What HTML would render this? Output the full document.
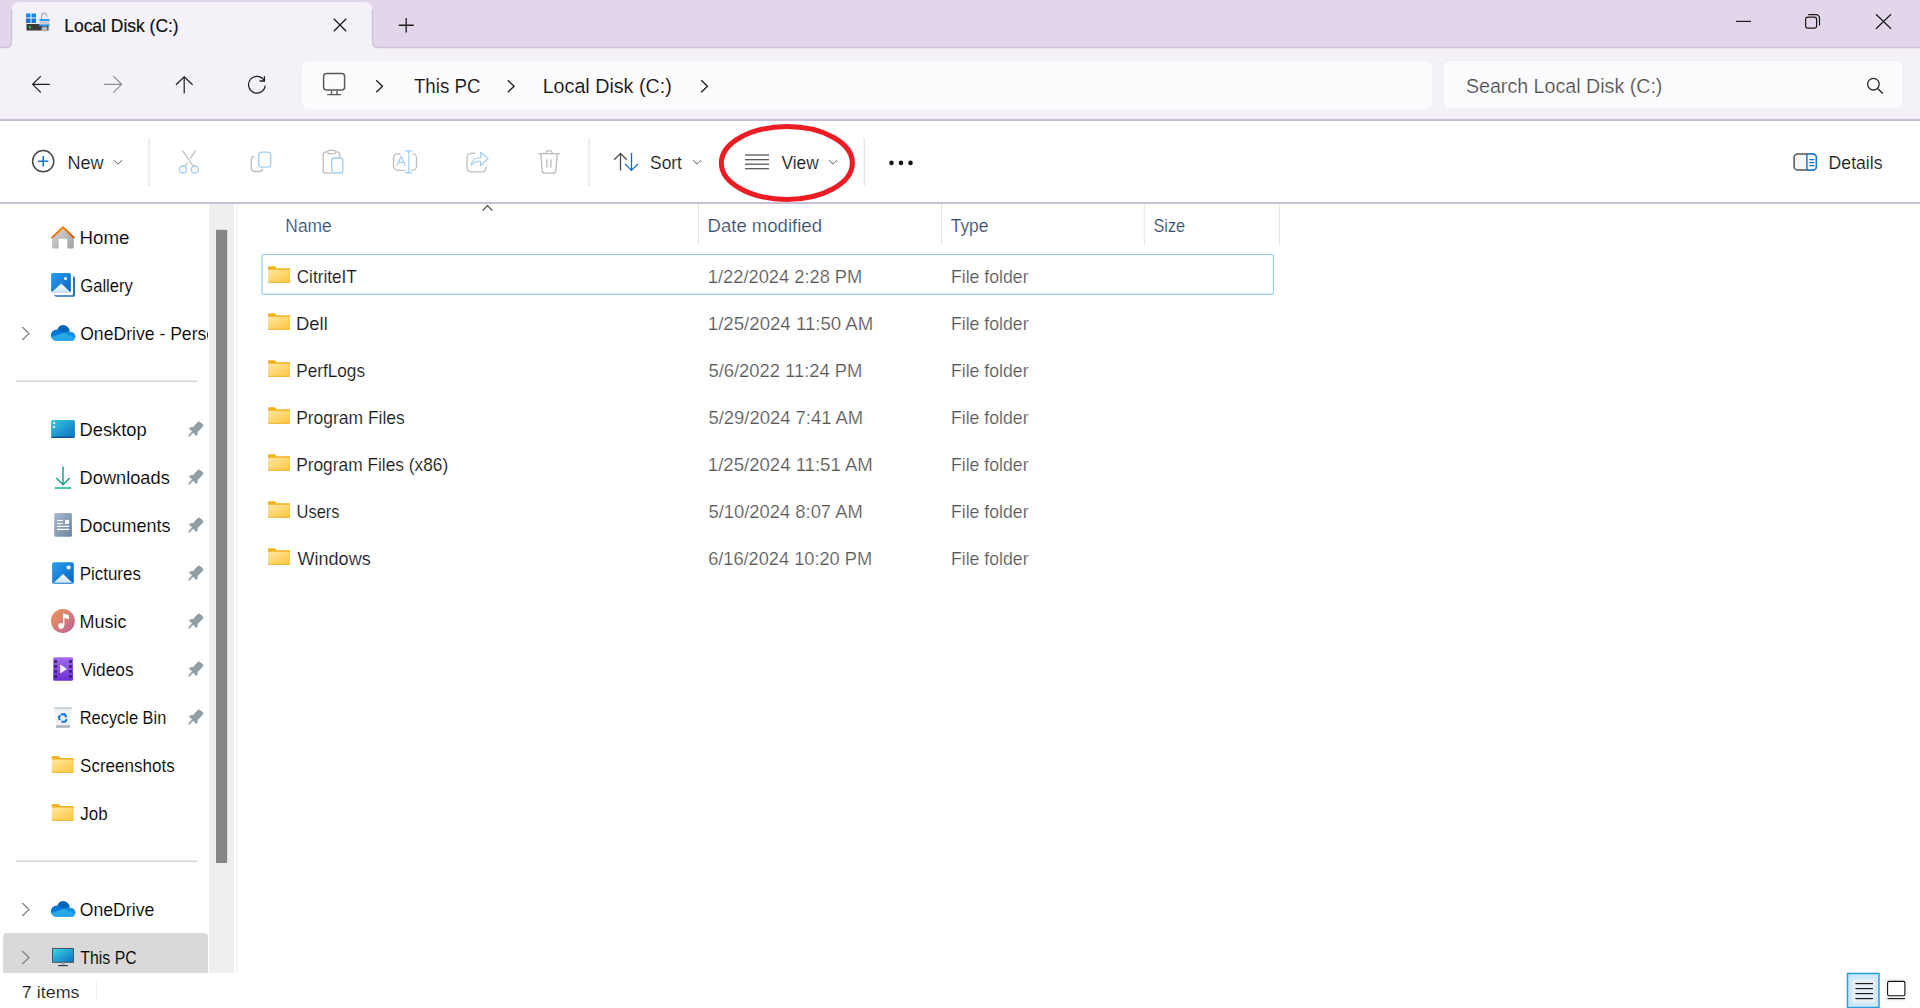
<!DOCTYPE html>
<html><head><meta charset="utf-8"><title>Local Disk (C:)</title>
<style>html,body{margin:0;padding:0;width:1920px;height:1008px;overflow:hidden;background:#fff}
svg{display:block;font-family:"Liberation Sans", sans-serif}</style></head>
<body><svg width="1920" height="1008" viewBox="0 0 1920 1008">
<rect x="0" y="0" width="1920" height="1008" fill="#ffffff"/>
<rect x="0" y="0" width="1920" height="48" fill="#e2d6eb"/>
<path d="M0,48 H5.5 Q12,48 12,41.5 V10 Q12,2 20,2 H364 Q372,2 372,10 V41.5 Q372,48 378.5,48 H1920 V119 H0 Z" fill="#f4f1f8"/>
<path d="M0,47.5 H5.5 Q11.5,47.5 11.5,41.5 V10 M372.5,10 V41.5 Q372.5,47.5 378.5,47.5 H1920" fill="none" stroke="#cfc3db" stroke-width="1.5"/>
<rect x="302" y="61" width="1130" height="48" rx="7" fill="#fcfbfd"/>
<rect x="1443" y="60.5" width="460" height="48.5" rx="7" fill="#fcfbfd" stroke="#eeebf2" stroke-width="1"/>
<rect x="0" y="119" width="1920" height="2" fill="#cbbed8"/>
<rect x="0" y="202" width="1920" height="2" fill="#cbbed8"/>
<rect x="148.5" y="138" width="1.5" height="48" fill="#e8e8e8"/>
<rect x="588.5" y="138" width="1.5" height="48" fill="#e8e8e8"/>
<rect x="863.5" y="138" width="1.5" height="48" fill="#e8e8e8"/>
<g>
<rect x="26" y="13.5" width="4.5" height="4" fill="#1e88e5"/><rect x="31.5" y="13.5" width="4.5" height="4" fill="#1e88e5"/>
<rect x="26" y="18.5" width="4.5" height="4.5" fill="#1976d2"/><rect x="31.5" y="18.5" width="4.5" height="4.5" fill="#1976d2"/>
<rect x="26.5" y="24" width="22" height="6.5" fill="#3a3a3a"/>
<rect x="29" y="26.3" width="2" height="2" fill="#2ee02e"/>
<path d="M41.5,19 v-3.2 a2.7,2.7 0 0 1 5.4,0 v1" fill="none" stroke="#9fb0c0" stroke-width="1.2"/>
<rect x="39.5" y="19" width="10" height="7" fill="#c8cdd3"/>
<rect x="39.5" y="19" width="10" height="1.8" fill="#2196f3"/>
<rect x="39.5" y="24.5" width="10" height="1.8" fill="#2196f3"/>
<ellipse cx="44.5" cy="29" rx="3" ry="2.4" fill="#b0b8c0"/>
</g>
<path d="M333.8,18.8 L346.2,31.2 M346.2,18.8 L333.8,31.2" stroke="#1a1a1a" stroke-width="1.3" fill="none"/>
<path d="M406.2,18 V32.5 M398.8,25.25 H413.7" stroke="#1a1a1a" stroke-width="1.3" fill="none"/>
<path d="M1736,21.4 H1751" stroke="#1a1a1a" stroke-width="1.2"/>
<rect x="1805.6" y="17.2" width="11" height="11" rx="2.2" fill="none" stroke="#1a1a1a" stroke-width="1.2"/>
<path d="M1808.2,14.6 H1816 a3.5,3.5 0 0 1 3.5,3.5 V25.6" fill="none" stroke="#1a1a1a" stroke-width="1.2"/>
<path d="M1876,14.2 L1891,28.8 M1891,14.2 L1876,28.8" stroke="#1a1a1a" stroke-width="1.2" fill="none"/>
<path d="M49.7,84.3 H32.6 M40.9,76.1 L32.6,84.3 L40.9,92.6" stroke="#1c1c1c" stroke-width="1.2" fill="none"/>
<path d="M104,84.3 H121.6 M113.3,76.1 L121.6,84.3 L113.3,92.6" stroke="#8c8c8c" stroke-width="1.2" fill="none"/>
<path d="M184.2,93.6 V76.8 M176,84.8 L184.2,76.8 L192.6,84.8" stroke="#1c1c1c" stroke-width="1.2" fill="none"/>
<path d="M264.1,80.5 A8.35,8.35 0 1 0 265.2,85.6" stroke="#1c1c1c" stroke-width="1.25" fill="none"/>
<path d="M259.6,81 H264.4 V76.3" stroke="#1c1c1c" stroke-width="1.3" fill="none"/>
<rect x="323.6" y="73.6" width="21" height="16.5" rx="3" fill="none" stroke="#5a5a5a" stroke-width="1.5"/>
<path d="M331.5,90.5 V94.5 M337,90.5 V94.5 M327.3,94.6 H341.2" stroke="#5a5a5a" stroke-width="1.4" fill="none"/>
<path d="M376.2,80.2 L382.5,86.2 L376.2,92.2" stroke="#1c1c1c" stroke-width="1.3" fill="none"/>
<path d="M507.8,80.2 L514.1,86.2 L507.8,92.2" stroke="#1c1c1c" stroke-width="1.3" fill="none"/>
<path d="M701.2,80.2 L707.5,86.2 L701.2,92.2" stroke="#1c1c1c" stroke-width="1.3" fill="none"/>
<circle cx="1873.4" cy="84.2" r="5.8" fill="none" stroke="#2a2a2a" stroke-width="1.3"/>
<path d="M1877.6,88.4 L1882.8,93.4" stroke="#2a2a2a" stroke-width="1.4"/>
<circle cx="43.2" cy="161.2" r="10.6" fill="none" stroke="#4a4a4a" stroke-width="1.5"/>
<path d="M43.2,156 V166.4 M38.1,161.2 H48.3" stroke="#1677d2" stroke-width="1.6"/>
<path d="M114,160.2 L118,164.2 L122,160.2" stroke="#5a5a5a" stroke-width="1" fill="none"/>
<path d="M693,160.2 L697,164.2 L701,160.2" stroke="#5a5a5a" stroke-width="1" fill="none"/>
<path d="M829,160.2 L833,164.2 L837,160.2" stroke="#5a5a5a" stroke-width="1" fill="none"/>
<path d="M182.2,150.3 L194,167 M195.8,150.3 L190.3,158.4 M187.6,162.5 L184.5,167" stroke="#bdbdbd" stroke-width="1.2" fill="none"/>
<circle cx="182.9" cy="169.6" r="3.6" fill="none" stroke="#9fcdf2" stroke-width="1.3"/><circle cx="194.8" cy="169.6" r="3.6" fill="none" stroke="#9fcdf2" stroke-width="1.3"/>
<path d="M254.5,156.6 a3.5,3.5 0 0 0 -3.3,3.5 V168 a3.5,3.5 0 0 0 3.5,3.5 H259.5 a3.5,3.5 0 0 0 3.4,-2.6" stroke="#bdbdbd" stroke-width="1.3" fill="none"/>
<rect x="258.7" y="152.2" width="12" height="15" rx="3.2" fill="none" stroke="#9fcdf2" stroke-width="1.3"/>
<path d="M327.5,151.8 H326 a2.8,2.8 0 0 0 -2.8,2.8 V170.4 a2.8,2.8 0 0 0 2.8,2.8 H331 M335.5,151.8 H337 a2.8,2.8 0 0 1 2.8,2.8 V157.5" stroke="#bdbdbd" stroke-width="1.3" fill="none"/>
<rect x="327.6" y="150.4" width="7.8" height="3.2" rx="1.6" fill="none" stroke="#bdbdbd" stroke-width="1.2"/>
<rect x="331.8" y="158" width="11" height="15" rx="2.2" fill="none" stroke="#9fcdf2" stroke-width="1.3"/>
<path d="M400.5,153.8 H397.5 a4,4 0 0 0 -4,4 V166.3 a4,4 0 0 0 4,4 H405 M412.5,153.8 H412.5 a4,4 0 0 1 4,4 V166.3 a4,4 0 0 1 -4,4 H411.5" stroke="#bdbdbd" stroke-width="1.3" fill="none"/>
<path d="M408.9,150.6 V173.1 M405.2,150.8 H412.3 M405.2,172.9 H412.3" stroke="#9fcdf2" stroke-width="1.2" fill="none"/>
<path d="M396.8,165.8 L401.1,156.4 L405.4,165.8 M398.3,162.4 H403.9" stroke="#9fcdf2" stroke-width="1.1" fill="none"/>
<path d="M475,153.3 H470.8 a3.8,3.8 0 0 0 -3.8,3.8 V168 a3.8,3.8 0 0 0 3.8,3.8 H482 a3.8,3.8 0 0 0 3.8,-3.8 V166.7" stroke="#bdbdbd" stroke-width="1.3" fill="none"/>
<path d="M470.9,165.3 C472,160 476,157.4 480.6,157.8 V152.2 L488,158.8 L480.6,165.6 V161.3 C476.5,161 473.5,162.6 470.9,165.3 Z" stroke="#9fcdf2" stroke-width="1.2" fill="none" stroke-linejoin="round"/>
<path d="M538.3,153.6 H559.8 M545.8,153.6 a3.2,3 0 0 1 6.5,0 M540.8,153.8 L542.2,170.6 a2.8,2.8 0 0 0 2.8,2.6 H553 a2.8,2.8 0 0 0 2.8,-2.6 L557.3,153.8 M546.9,159.2 V167.6 M550.9,159.2 V167.6" stroke="#bdbdbd" stroke-width="1.3" fill="none"/>
<path d="M620.5,170.6 V153.4 M614.2,159.7 L620.5,153.4 L626.8,159.7" stroke="#4a4a4a" stroke-width="1.3" fill="none"/>
<path d="M631.5,153.1 V170.2 M625,163.9 L631.5,170.4 L638,163.9" stroke="#0f6cbd" stroke-width="1.3" fill="none"/>
<path d="M745,155 H769" stroke="#4a4a4a" stroke-width="1.2"/>
<path d="M745,159.7 H769" stroke="#4a4a4a" stroke-width="1.2"/>
<path d="M745,164.2 H769" stroke="#4a4a4a" stroke-width="1.2"/>
<path d="M745,168.7 H769" stroke="#4a4a4a" stroke-width="1.2"/>
<circle cx="891.5" cy="162.9" r="2.3" fill="#151515"/>
<circle cx="901" cy="162.9" r="2.3" fill="#151515"/>
<circle cx="910.5" cy="162.9" r="2.3" fill="#151515"/>
<rect x="1794.1" y="153.9" width="22.2" height="16.2" rx="3.6" fill="#f7f7f7" stroke="#555555" stroke-width="1.5"/>
<path d="M1806.9,153.9 H1812.7 a3.6,3.6 0 0 1 3.6,3.6 V166.5 a3.6,3.6 0 0 1 -3.6,3.6 H1806.9 Z" fill="#fbfbfb" stroke="#1479d6" stroke-width="1.5"/>
<path d="M1809.8,159.7 H1814 M1809.8,162.6 H1814 M1809.8,165.6 H1814" stroke="#1479d6" stroke-width="1.3" stroke-linecap="round"/>
<ellipse cx="786.85" cy="163" rx="65.5" ry="36.4" fill="none" stroke="#ec1c24" stroke-width="5"/>
<rect x="209" y="204" width="25" height="769" fill="#efefef"/>
<rect x="236" y="204" width="2" height="769" fill="#f6f6f6"/>
<rect x="216" y="229.8" width="11.2" height="633.2" fill="#868686"/>
<rect x="15.5" y="380.5" width="181.5" height="1.5" fill="#d6d6d6"/>
<rect x="15.5" y="860.5" width="181.5" height="1.5" fill="#d6d6d6"/>
<path d="M3,973 V937 a4,4 0 0 1 4,-4 H204 a4,4 0 0 1 4,4 V973 Z" fill="#d9d9d9"/>
<defs><clipPath id="clipsb"><rect x="0" y="300" width="208" height="60"/></clipPath><linearGradient id="fold" x1="0" y1="0" x2="1" y2="1"><stop offset="0" stop-color="#ffe6a0"/><stop offset="1" stop-color="#fcc63c"/></linearGradient><linearGradient id="desk" x1="0" y1="0" x2="1" y2="1"><stop offset="0" stop-color="#36c8e0"/><stop offset="1" stop-color="#0e6fc0"/></linearGradient><linearGradient id="doc" x1="0" y1="0" x2="1" y2="1"><stop offset="0" stop-color="#a9bbd0"/><stop offset="1" stop-color="#6b83a0"/></linearGradient><linearGradient id="pic" x1="0" y1="0" x2="1" y2="1"><stop offset="0" stop-color="#2aa0f0"/><stop offset="1" stop-color="#0a62c0"/></linearGradient><linearGradient id="mus" x1="0" y1="0" x2="1" y2="1"><stop offset="0" stop-color="#f29a52"/><stop offset="1" stop-color="#b9609a"/></linearGradient><linearGradient id="vid" x1="0" y1="0" x2="0" y2="1"><stop offset="0" stop-color="#a46cf0"/><stop offset="1" stop-color="#6a2ed0"/></linearGradient><linearGradient id="home" x1="0" y1="0" x2="1" y2="1"><stop offset="0" stop-color="#d6d6d6"/><stop offset="1" stop-color="#a2a2a2"/></linearGradient><linearGradient id="roof" x1="0" y1="0" x2="1" y2="1"><stop offset="0" stop-color="#f59a10"/><stop offset="1" stop-color="#dc5000"/></linearGradient><linearGradient id="mtn" x1="0" y1="0" x2="0" y2="1"><stop offset="0" stop-color="#f4faff"/><stop offset="1" stop-color="#cfe6fb"/></linearGradient><clipPath id="cloudclip"><circle cx="56.6" cy="335.2" r="5.7"/><circle cx="63.4" cy="331.6" r="6.3"/><circle cx="71" cy="336.6" r="4.3"/><rect x="56.6" y="334" width="14.4" height="6.9"/></clipPath><linearGradient id="pc" x1="0" y1="0" x2="1" y2="1"><stop offset="0" stop-color="#40d8e8"/><stop offset="1" stop-color="#0a70c0"/></linearGradient></defs>
<path d="M22.2,327.0 L29,333.5 L22.2,340.0" stroke="#858585" stroke-width="1.3" fill="none"/>
<path d="M22.2,903.0 L29,909.5 L22.2,916.0" stroke="#858585" stroke-width="1.3" fill="none"/>
<path d="M22.2,951.0 L29,957.5 L22.2,964.0" stroke="#858585" stroke-width="1.3" fill="none"/>
<path d="M52.1,238 L62.9,228 L73.8,238 V247.2 a1.4,1.4 0 0 1 -1.4,1.4 H67.2 V238.8 H58.7 V248.6 H53.5 a1.4,1.4 0 0 1 -1.4,-1.4 Z" fill="url(#home)"/>
<path d="M52.2,237.4 L62.9,227.2 L73.7,237.4" stroke="url(#roof)" stroke-width="2.1" fill="none" stroke-linecap="round" stroke-linejoin="round"/>
<path d="M73.1,276 L74.9,277.5 V294.8 a2,2 0 0 1 -2,2 H56 L54,294.9 H72 a1.1,1.1 0 0 0 1.1,-1.1 Z" fill="#1a62c0"/>
<path d="M54,294.9 H72.5 L74.9,296.8 H56 Z" fill="#5a92d6"/>
<rect x="51.1" y="273" width="19.8" height="19.3" rx="1.6" fill="url(#pic)"/>
<path d="M51.6,292.3 L61.3,283.6 L70.4,292.3 Z" fill="url(#mtn)"/>
<circle cx="65.5" cy="278.4" r="1.5" fill="#ffffff"/>
<g transform="translate(0,0)"><g clip-path="url(#cloudclip)"><rect x="50" y="324" width="26" height="18" fill="#0078d4"/><path d="M56.5,328.4 L64.4,332.8 L71,330.6 L71,324 L56,324 Z" fill="#0364b8"/><path d="M64.4,332.8 L71,330.6 L76,331 L76,339 Z" fill="#1490df"/><path d="M50,337.6 L64.4,332.6 L76,339.2 V342 H50 Z" fill="#28a8ea"/></g></g>
<g transform="translate(0,576)"><g clip-path="url(#cloudclip)"><rect x="50" y="324" width="26" height="18" fill="#0078d4"/><path d="M56.5,328.4 L64.4,332.8 L71,330.6 L71,324 L56,324 Z" fill="#0364b8"/><path d="M64.4,332.8 L71,330.6 L76,331 L76,339 Z" fill="#1490df"/><path d="M50,337.6 L64.4,332.6 L76,339.2 V342 H50 Z" fill="#28a8ea"/></g></g>
<rect x="51.1" y="420" width="23.8" height="17.9" rx="1.6" fill="url(#desk)"/>
<rect x="51.6" y="436.6" width="18.6" height="1.3" fill="#0b4a8a"/>
<rect x="70.8" y="436.9" width="1.2" height="1" fill="#0b4a8a"/><rect x="72.8" y="436.9" width="1.2" height="1" fill="#0b4a8a"/>
<rect x="53.2" y="422.2" width="1.9" height="1.8" fill="#fff"/><rect x="53.2" y="426" width="1.9" height="1.8" fill="#fff"/>
<path d="M63,466.4 V484.6 M56.3,478 L63,484.8 L69.7,478" stroke="#1aa98a" stroke-width="1.5" fill="none"/>
<rect x="54.9" y="487.2" width="16.3" height="1.6" fill="#20b890"/>
<rect x="54.2" y="513" width="17.7" height="23.8" rx="1.6" fill="url(#doc)"/>
<path d="M57,520.5 H62.9 M57,523.5 H62.9 M57,526.4 H69 M57,529.4 H69" stroke="#ffffff" stroke-width="1.2"/>
<rect x="65" y="519.9" width="4" height="4" fill="#fff"/>
<rect x="52.1" y="562.2" width="21.7" height="21.6" rx="1.8" fill="url(#pic)"/>
<path d="M53.8,582.7 L63,574 L72.3,582.7 Z" fill="url(#mtn)"/>
<circle cx="68.6" cy="567.5" r="2.1" fill="#fff"/>
<circle cx="62.9" cy="621" r="11.9" fill="url(#mus)"/>
<path d="M63,626 V613.2 L69,615.2 V619.4 L64.4,617.8 V626 Z" fill="#fff"/>
<circle cx="61" cy="625.9" r="2.8" fill="#fff"/>
<rect x="53.2" y="657.2" width="19.8" height="23.6" rx="1.6" fill="url(#vid)"/>
<rect x="54.2" y="660.2" width="2.8" height="2.7" fill="#3b2266"/><rect x="69.1" y="660.2" width="2.8" height="2.7" fill="#3b2266"/>
<rect x="54.2" y="665.1" width="2.8" height="2.7" fill="#3b2266"/><rect x="69.1" y="665.1" width="2.8" height="2.7" fill="#3b2266"/>
<rect x="54.2" y="670.1" width="2.8" height="2.7" fill="#3b2266"/><rect x="69.1" y="670.1" width="2.8" height="2.7" fill="#3b2266"/>
<rect x="54.2" y="675.1" width="2.8" height="2.7" fill="#3b2266"/><rect x="69.1" y="675.1" width="2.8" height="2.7" fill="#3b2266"/>
<path d="M60.1,664.3 L67.05,669 L60.1,673.5 Z" fill="#f2eef8"/>
<path d="M54.4,707.1 H71.9 L69.8,727.8 H56.1 Z" fill="#eef1f4"/>
<path d="M54.4,707.1 H71.9 L71.7,709.3 H54.6 Z" fill="#d0d4d8"/>
<path d="M56,725.3 H70 L69.8,727.8 H56.1 Z" fill="#aeb3b8"/>
<g transform="translate(62.9,717.7)" fill="none" stroke="#1a7ad8" stroke-width="2.1"><path d="M-2.2,-3.2 L1.6,-3.6 L3.4,-0.6"/><path d="M3.9,1.4 L2.2,4 H-1.6"/><path d="M-3.2,2.6 L-4,-0.6 L-2.6,-2.2"/></g>
<g transform="translate(188.5,436.3) rotate(-45)" fill="#929ea6"><rect x="0" y="-0.9" width="7" height="1.8" rx="0.9"/><path d="M5.8,-5.8 V5.8 L10,3.4 V-3.4 Z"/><rect x="9" y="-3.5" width="9.5" height="7" rx="2"/></g>
<g transform="translate(188.5,484.3) rotate(-45)" fill="#929ea6"><rect x="0" y="-0.9" width="7" height="1.8" rx="0.9"/><path d="M5.8,-5.8 V5.8 L10,3.4 V-3.4 Z"/><rect x="9" y="-3.5" width="9.5" height="7" rx="2"/></g>
<g transform="translate(188.5,532.3) rotate(-45)" fill="#929ea6"><rect x="0" y="-0.9" width="7" height="1.8" rx="0.9"/><path d="M5.8,-5.8 V5.8 L10,3.4 V-3.4 Z"/><rect x="9" y="-3.5" width="9.5" height="7" rx="2"/></g>
<g transform="translate(188.5,580.3) rotate(-45)" fill="#929ea6"><rect x="0" y="-0.9" width="7" height="1.8" rx="0.9"/><path d="M5.8,-5.8 V5.8 L10,3.4 V-3.4 Z"/><rect x="9" y="-3.5" width="9.5" height="7" rx="2"/></g>
<g transform="translate(188.5,628.3) rotate(-45)" fill="#929ea6"><rect x="0" y="-0.9" width="7" height="1.8" rx="0.9"/><path d="M5.8,-5.8 V5.8 L10,3.4 V-3.4 Z"/><rect x="9" y="-3.5" width="9.5" height="7" rx="2"/></g>
<g transform="translate(188.5,676.3) rotate(-45)" fill="#929ea6"><rect x="0" y="-0.9" width="7" height="1.8" rx="0.9"/><path d="M5.8,-5.8 V5.8 L10,3.4 V-3.4 Z"/><rect x="9" y="-3.5" width="9.5" height="7" rx="2"/></g>
<g transform="translate(188.5,724.3) rotate(-45)" fill="#929ea6"><rect x="0" y="-0.9" width="7" height="1.8" rx="0.9"/><path d="M5.8,-5.8 V5.8 L10,3.4 V-3.4 Z"/><rect x="9" y="-3.5" width="9.5" height="7" rx="2"/></g>
<g transform="translate(51.7,755.9)"><path d="M0,1.2 a1.2,1.2 0 0 1 1.2,-1.2 H6.4 a1.2,1.2 0 0 1 0.9,0.4 L8.4,2 H21.9 V4 H0 Z" fill="#f2b31e"/><rect x="0" y="3.6" width="21.9" height="13.200000000000001" rx="0.8" fill="url(#fold)"/><rect x="0" y="15.8" width="21.9" height="1" fill="#ecb434"/></g>
<g transform="translate(51.7,803.9)"><path d="M0,1.2 a1.2,1.2 0 0 1 1.2,-1.2 H6.4 a1.2,1.2 0 0 1 0.9,0.4 L8.4,2 H21.9 V4 H0 Z" fill="#f2b31e"/><rect x="0" y="3.6" width="21.9" height="13.200000000000001" rx="0.8" fill="url(#fold)"/><rect x="0" y="15.8" width="21.9" height="1" fill="#ecb434"/></g>
<rect x="52.5" y="948.4" width="20.9" height="13.9" fill="url(#pc)" stroke="#3c4c5a" stroke-width="0.9"/>
<rect x="61.3" y="962.7" width="3.7" height="2.3" fill="#a8b0b8"/>
<rect x="58" y="965" width="9.9" height="1.2" fill="#3c4450"/>
<rect x="698.0" y="204" width="1" height="41" fill="#e5e5e5"/>
<rect x="941.0" y="204" width="1" height="41" fill="#e5e5e5"/>
<rect x="1143.8" y="204" width="1" height="41" fill="#e5e5e5"/>
<rect x="1279.1" y="204" width="1" height="41" fill="#e5e5e5"/>
<path d="M482.6,210.6 L487.5,205.5 L492.4,210.6" stroke="#3c3c3c" stroke-width="1.1" fill="none"/>
<rect x="262" y="254.5" width="1011.5" height="39.8" rx="1.5" fill="none" stroke="#94ccf5" stroke-width="1.15"/>
<g transform="translate(268,266.2)"><path d="M0,1.2 a1.2,1.2 0 0 1 1.2,-1.2 H6.4 a1.2,1.2 0 0 1 0.9,0.4 L8.4,2 H22 V4 H0 Z" fill="#f2b31e"/><rect x="0" y="3.6" width="22" height="13.000000000000002" rx="0.8" fill="url(#fold)"/><rect x="0" y="15.600000000000001" width="22" height="1" fill="#ecb434"/></g>
<g transform="translate(268,313.2)"><path d="M0,1.2 a1.2,1.2 0 0 1 1.2,-1.2 H6.4 a1.2,1.2 0 0 1 0.9,0.4 L8.4,2 H22 V4 H0 Z" fill="#f2b31e"/><rect x="0" y="3.6" width="22" height="13.000000000000002" rx="0.8" fill="url(#fold)"/><rect x="0" y="15.600000000000001" width="22" height="1" fill="#ecb434"/></g>
<g transform="translate(268,360.2)"><path d="M0,1.2 a1.2,1.2 0 0 1 1.2,-1.2 H6.4 a1.2,1.2 0 0 1 0.9,0.4 L8.4,2 H22 V4 H0 Z" fill="#f2b31e"/><rect x="0" y="3.6" width="22" height="13.000000000000002" rx="0.8" fill="url(#fold)"/><rect x="0" y="15.600000000000001" width="22" height="1" fill="#ecb434"/></g>
<g transform="translate(268,407.2)"><path d="M0,1.2 a1.2,1.2 0 0 1 1.2,-1.2 H6.4 a1.2,1.2 0 0 1 0.9,0.4 L8.4,2 H22 V4 H0 Z" fill="#f2b31e"/><rect x="0" y="3.6" width="22" height="13.000000000000002" rx="0.8" fill="url(#fold)"/><rect x="0" y="15.600000000000001" width="22" height="1" fill="#ecb434"/></g>
<g transform="translate(268,454.2)"><path d="M0,1.2 a1.2,1.2 0 0 1 1.2,-1.2 H6.4 a1.2,1.2 0 0 1 0.9,0.4 L8.4,2 H22 V4 H0 Z" fill="#f2b31e"/><rect x="0" y="3.6" width="22" height="13.000000000000002" rx="0.8" fill="url(#fold)"/><rect x="0" y="15.600000000000001" width="22" height="1" fill="#ecb434"/></g>
<g transform="translate(268,501.2)"><path d="M0,1.2 a1.2,1.2 0 0 1 1.2,-1.2 H6.4 a1.2,1.2 0 0 1 0.9,0.4 L8.4,2 H22 V4 H0 Z" fill="#f2b31e"/><rect x="0" y="3.6" width="22" height="13.000000000000002" rx="0.8" fill="url(#fold)"/><rect x="0" y="15.600000000000001" width="22" height="1" fill="#ecb434"/></g>
<g transform="translate(268,548.2)"><path d="M0,1.2 a1.2,1.2 0 0 1 1.2,-1.2 H6.4 a1.2,1.2 0 0 1 0.9,0.4 L8.4,2 H22 V4 H0 Z" fill="#f2b31e"/><rect x="0" y="3.6" width="22" height="13.000000000000002" rx="0.8" fill="url(#fold)"/><rect x="0" y="15.600000000000001" width="22" height="1" fill="#ecb434"/></g>
<rect x="96" y="982" width="1" height="19" fill="#ededed"/>
<rect x="1847.5" y="973.5" width="31.5" height="34" fill="#cde8f6" stroke="#2a9de0" stroke-width="1.5"/>
<rect x="1852" y="979" width="23" height="24" rx="2" fill="#e4eef4"/>
<path d="M1855.4,983.6 H1873" stroke="#111" stroke-width="1.1"/>
<path d="M1855.4,988.6 H1873" stroke="#111" stroke-width="1.1"/>
<path d="M1855.4,993.6 H1873" stroke="#111" stroke-width="1.1"/>
<path d="M1855.4,998.6 H1873" stroke="#111" stroke-width="1.1"/>
<rect x="1884.5" y="978.5" width="23" height="23" rx="2" fill="#f6f6f6"/>
<rect x="1887.6" y="981.4" width="17.3" height="14.3" rx="1.5" fill="#fff" stroke="#111" stroke-width="1.1"/>
<path d="M1887.6,998.6 H1904.9" stroke="#111" stroke-width="1.1"/>
<text transform="translate(64.23,32.10) scale(0.9344,1)" font-size="18.7" font-weight="400" fill="#111111" stroke="#111111" stroke-width="0.2">Local Disk (C:)</text>
<text transform="translate(413.91,92.50) scale(0.8937,1)" font-size="21" font-weight="400" fill="#111111" stroke="#fcfbfd" stroke-width="0.14">This PC</text>
<text transform="translate(542.66,92.50) scale(0.9380,1)" font-size="21" font-weight="400" fill="#111111" stroke="#fcfbfd" stroke-width="0.14">Local Disk (C:)</text>
<text transform="translate(1465.89,92.70) scale(0.9361,1)" font-size="21" font-weight="400" fill="#4a4a4a" stroke="#fcfbfd" stroke-width="0.25">Search Local Disk (C:)</text>
<text transform="translate(67.49,169.00) scale(0.9779,1)" font-size="18.5" font-weight="400" fill="#1a1a1a" stroke="#ffffff" stroke-width="0.14">New</text>
<text transform="translate(650.06,168.60) scale(0.9397,1)" font-size="18.5" font-weight="400" fill="#1a1a1a" stroke="#ffffff" stroke-width="0.14">Sort</text>
<text transform="translate(781.40,168.90) scale(0.9377,1)" font-size="18.5" font-weight="400" fill="#1a1a1a" stroke="#ffffff" stroke-width="0.14">View</text>
<text transform="translate(1828.62,168.80) scale(0.9537,1)" font-size="18.5" font-weight="400" fill="#1a1a1a" stroke="#ffffff" stroke-width="0.14">Details</text>
<text transform="translate(79.54,243.90) scale(1.0397,1)" font-size="18" font-weight="400" fill="#000" stroke="#ffffff" stroke-width="0.14">Home</text>
<text transform="translate(80.22,291.60) scale(0.9240,1)" font-size="18" font-weight="400" fill="#000" stroke="#ffffff" stroke-width="0.14">Gallery</text>
<g clip-path="url(#clipsb)"><text transform="translate(80.17,339.80) scale(0.9778,1)" font-size="18" font-weight="400" fill="#000" stroke="#ffffff" stroke-width="0.14">OneDrive - Personal</text></g>
<text transform="translate(79.57,435.80) scale(1.0173,1)" font-size="18" font-weight="400" fill="#000" stroke="#ffffff" stroke-width="0.14">Desktop</text>
<text transform="translate(79.58,483.80) scale(1.0128,1)" font-size="18" font-weight="400" fill="#000" stroke="#ffffff" stroke-width="0.14">Downloads</text>
<text transform="translate(79.59,531.80) scale(0.9992,1)" font-size="18" font-weight="400" fill="#000" stroke="#ffffff" stroke-width="0.14">Documents</text>
<text transform="translate(79.68,579.80) scale(0.9421,1)" font-size="18" font-weight="400" fill="#000" stroke="#ffffff" stroke-width="0.14">Pictures</text>
<text transform="translate(79.60,627.80) scale(0.9985,1)" font-size="18" font-weight="400" fill="#000" stroke="#ffffff" stroke-width="0.14">Music</text>
<text transform="translate(81.00,675.80) scale(0.9640,1)" font-size="18" font-weight="400" fill="#000" stroke="#ffffff" stroke-width="0.14">Videos</text>
<text transform="translate(79.72,723.80) scale(0.9113,1)" font-size="18" font-weight="400" fill="#000" stroke="#ffffff" stroke-width="0.14">Recycle Bin</text>
<text transform="translate(80.07,771.80) scale(0.9471,1)" font-size="18" font-weight="400" fill="#000" stroke="#ffffff" stroke-width="0.14">Screenshots</text>
<text transform="translate(80.33,819.80) scale(0.9425,1)" font-size="18" font-weight="400" fill="#000" stroke="#ffffff" stroke-width="0.14">Job</text>
<text transform="translate(79.77,915.60) scale(0.9805,1)" font-size="18" font-weight="400" fill="#000" stroke="#ffffff" stroke-width="0.14">OneDrive</text>
<text transform="translate(80.35,963.60) scale(0.8811,1)" font-size="18" font-weight="400" fill="#000" stroke="#d9d9d9" stroke-width="0.14">This PC</text>
<text transform="translate(285.34,231.80) scale(0.9678,1)" font-size="18" font-weight="400" fill="#34496a" stroke="#ffffff" stroke-width="0.2">Name</text>
<text transform="translate(707.55,231.80) scale(1.0309,1)" font-size="18" font-weight="400" fill="#34496a" stroke="#ffffff" stroke-width="0.2">Date modified</text>
<text transform="translate(950.73,231.80) scale(0.9655,1)" font-size="18" font-weight="400" fill="#34496a" stroke="#ffffff" stroke-width="0.2">Type</text>
<text transform="translate(1153.49,231.80) scale(0.9014,1)" font-size="18" font-weight="400" fill="#34496a" stroke="#ffffff" stroke-width="0.2">Size</text>
<text transform="translate(296.69,282.80) scale(0.9556,1)" font-size="18" font-weight="400" fill="#1a1a1a" stroke="#ffffff" stroke-width="0.14">CitriteIT</text>
<text transform="translate(707.86,282.80) scale(1.0165,1)" font-size="18" font-weight="400" fill="#575757" stroke="#ffffff" stroke-width="0.2">1/22/2024 2:28 PM</text>
<text transform="translate(950.92,282.80) scale(0.9828,1)" font-size="18" font-weight="400" fill="#575757" stroke="#ffffff" stroke-width="0.2">File folder</text>
<text transform="translate(296.06,329.80) scale(1.0241,1)" font-size="18" font-weight="400" fill="#1a1a1a" stroke="#ffffff" stroke-width="0.14">Dell</text>
<text transform="translate(707.83,329.80) scale(1.0363,1)" font-size="18" font-weight="400" fill="#575757" stroke="#ffffff" stroke-width="0.2">1/25/2024 11:50 AM</text>
<text transform="translate(950.92,329.80) scale(0.9828,1)" font-size="18" font-weight="400" fill="#575757" stroke="#ffffff" stroke-width="0.2">File folder</text>
<text transform="translate(296.16,376.80) scale(0.9561,1)" font-size="18" font-weight="400" fill="#1a1a1a" stroke="#ffffff" stroke-width="0.14">PerfLogs</text>
<text transform="translate(708.43,376.80) scale(1.0218,1)" font-size="18" font-weight="400" fill="#575757" stroke="#ffffff" stroke-width="0.2">5/6/2022 11:24 PM</text>
<text transform="translate(950.92,376.80) scale(0.9828,1)" font-size="18" font-weight="400" fill="#575757" stroke="#ffffff" stroke-width="0.2">File folder</text>
<text transform="translate(296.14,423.80) scale(0.9704,1)" font-size="18" font-weight="400" fill="#1a1a1a" stroke="#ffffff" stroke-width="0.14">Program Files</text>
<text transform="translate(708.42,423.80) scale(1.0244,1)" font-size="18" font-weight="400" fill="#575757" stroke="#ffffff" stroke-width="0.2">5/29/2024 7:41 AM</text>
<text transform="translate(950.92,423.80) scale(0.9828,1)" font-size="18" font-weight="400" fill="#575757" stroke="#ffffff" stroke-width="0.2">File folder</text>
<text transform="translate(296.15,470.80) scale(0.9634,1)" font-size="18" font-weight="400" fill="#1a1a1a" stroke="#ffffff" stroke-width="0.14">Program Files (x86)</text>
<text transform="translate(707.84,470.80) scale(1.0331,1)" font-size="18" font-weight="400" fill="#575757" stroke="#ffffff" stroke-width="0.2">1/25/2024 11:51 AM</text>
<text transform="translate(950.92,470.80) scale(0.9828,1)" font-size="18" font-weight="400" fill="#575757" stroke="#ffffff" stroke-width="0.2">File folder</text>
<text transform="translate(296.47,517.80) scale(0.9180,1)" font-size="18" font-weight="400" fill="#1a1a1a" stroke="#ffffff" stroke-width="0.14">Users</text>
<text transform="translate(708.43,517.80) scale(1.0217,1)" font-size="18" font-weight="400" fill="#575757" stroke="#ffffff" stroke-width="0.2">5/10/2024 8:07 AM</text>
<text transform="translate(950.92,517.80) scale(0.9828,1)" font-size="18" font-weight="400" fill="#575757" stroke="#ffffff" stroke-width="0.2">File folder</text>
<text transform="translate(297.50,564.80) scale(1.0034,1)" font-size="18" font-weight="400" fill="#1a1a1a" stroke="#ffffff" stroke-width="0.14">Windows</text>
<text transform="translate(708.15,564.80) scale(1.0115,1)" font-size="18" font-weight="400" fill="#575757" stroke="#ffffff" stroke-width="0.2">6/16/2024 10:20 PM</text>
<text transform="translate(950.92,564.80) scale(0.9828,1)" font-size="18" font-weight="400" fill="#575757" stroke="#ffffff" stroke-width="0.2">File folder</text>
<text transform="translate(21.86,998.00) scale(1.0849,1)" font-size="16.5" font-weight="400" fill="#1a1a1a" stroke="#ffffff" stroke-width="0.14">7 items</text>
</svg></body></html>
